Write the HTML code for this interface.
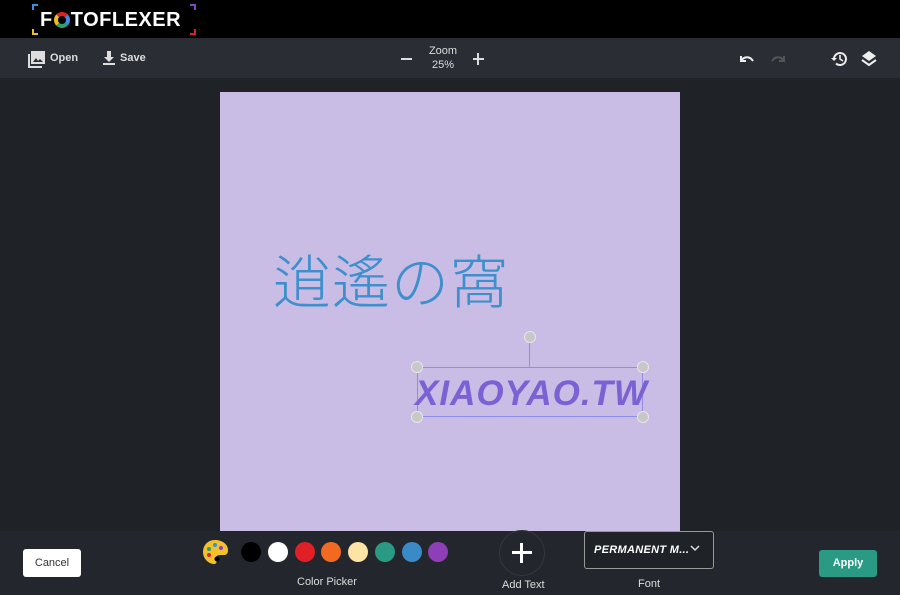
<!DOCTYPE html>
<html><head><meta charset="utf-8"><style>
*{margin:0;padding:0;box-sizing:border-box}
body{width:900px;height:595px;background:#1f2227;font-family:"Liberation Sans",sans-serif;position:relative;overflow:hidden;color:#fff}
.abs{position:absolute}
.h{width:12px;height:12px;border-radius:50%;background:#c8c8c8;border:1px solid #e6e6e6;position:absolute}
.dot{position:absolute;top:542px;width:20px;height:20px;border-radius:50%}
</style></head><body>
<div class="abs" style="left:0;top:0;width:900px;height:38px;background:#000"></div>
<!-- logo -->
<div class="abs" style="left:32px;top:4px;width:164px;height:31px">
<div class="abs" style="left:0;top:0;width:6px;height:6px;border-left:2px solid #3a8ee0;border-top:2px solid #3a8ee0"></div>
<div class="abs" style="left:0;bottom:0;width:6px;height:6px;border-left:2px solid #e8c020;border-bottom:2px solid #e8c020"></div>
<div class="abs" style="right:0;top:0;width:6px;height:6px;border-right:2px solid #7a4ac0;border-top:2px solid #7a4ac0"></div>
<div class="abs" style="right:0;bottom:0;width:6px;height:6px;border-right:2px solid #e02020;border-bottom:2px solid #e02020"></div>
<div class="abs" style="left:8px;top:5px;font-size:20px;font-weight:bold;letter-spacing:0.5px;color:#fff">F<span style="display:inline-block;width:16px;height:16px;border-radius:50%;border:4px solid;border-color:#e02020 #3a8ee0 #2aa070 #e8c020;vertical-align:-2px;margin:0 1px"></span>TOFLEXER</div>
</div>
<!-- toolbar -->
<div class="abs" style="left:0;top:38px;width:900px;height:40px;background:#2a2d34"></div>
<svg class="abs" style="left:28px;top:50px" width="18" height="18" viewBox="0 0 18 18"><rect x="3" y="1" width="14" height="13" fill="#ddd"/><path d="M5 12l3-4 2 3 2-2 3 3z" fill="#2a2d34"/><path d="M1 4v13h13" stroke="#ddd" stroke-width="2" fill="none"/></svg>
<div class="abs" style="left:50px;top:52px;font-size:11px;font-weight:bold;color:#ddd">Open</div>
<svg class="abs" style="left:102px;top:51px" width="14" height="15" viewBox="0 0 14 15"><path d="M5 0h4v6h3l-5 5-5-5h3z" fill="#ddd"/><rect x="1" y="12" width="12" height="2" fill="#ddd"/></svg>
<div class="abs" style="left:120px;top:52px;font-size:11px;font-weight:bold;color:#ddd">Save</div>
<div class="abs" style="left:401px;top:58px;width:11px;height:2px;background:#ddd"></div>
<div class="abs" style="left:428px;top:44px;font-size:11px;color:#ddd;text-align:center;width:30px;line-height:14px">Zoom<br>25%</div>
<div class="abs" style="left:473px;top:58px;width:11px;height:2px;background:#ddd"></div>
<div class="abs" style="left:477px;top:53px;width:2px;height:12px;background:#ddd"></div>
<svg class="abs" style="left:738px;top:52px" width="18" height="14" viewBox="0 0 18 14"><path d="M3 4v5h5" fill="none" stroke="#eee" stroke-width="2"/><path d="M3 9c3-5 9-5 12 0" fill="none" stroke="#eee" stroke-width="2"/></svg>
<svg class="abs" style="left:769px;top:52px" width="18" height="14" viewBox="0 0 18 14"><path d="M15 4v5h-5" fill="none" stroke="#555" stroke-width="2"/><path d="M15 9c-3-5-9-5-12 0" fill="none" stroke="#555" stroke-width="2"/></svg>
<svg class="abs" style="left:830px;top:50px" width="18" height="18" viewBox="0 0 18 18"><path d="M4 9a6 6 0 1 1 2 4.5" fill="none" stroke="#eee" stroke-width="2"/><path d="M1 8h6l-3 3z" fill="#eee"/><path d="M10 5v4l3 2" fill="none" stroke="#eee" stroke-width="1.6"/></svg>
<svg class="abs" style="left:861px;top:50px" width="16" height="17" viewBox="0 0 16 17"><path d="M8 1l7 5-7 5-7-5z" fill="#eee"/><path d="M1 10l7 5 7-5" fill="none" stroke="#eee" stroke-width="2"/></svg>
<!-- canvas -->
<div class="abs" style="left:220px;top:92px;width:460px;height:440px;background:#c9bde6"></div>
<div class="abs" style="left:273px;top:236px;font-family:'Noto Sans CJK JP',sans-serif;font-weight:300;font-size:58px;color:#3f8fcc;white-space:nowrap;letter-spacing:1px">逍遙の窩</div>
<div class="abs" style="left:529px;top:343px;width:1px;height:24px;background:#8e8ee8"></div>
<div class="abs" style="left:417px;top:367px;width:226px;height:50px;border:1px solid #8e8ee8"></div>
<div class="abs" style="left:415px;top:374px;font-size:35px;font-weight:bold;font-style:italic;color:#7b62d4;letter-spacing:1px;white-space:nowrap;transform:scaleX(1.0);transform-origin:left">XIAOYAO.TW</div>
<div class="h" style="left:524px;top:331px"></div>
<div class="h" style="left:411px;top:361px"></div>
<div class="h" style="left:637px;top:361px"></div>
<div class="h" style="left:411px;top:411px"></div>
<div class="h" style="left:637px;top:411px"></div>
<!-- bottom -->
<div class="abs" style="left:0;top:531px;width:900px;height:64px;background:#23262c"></div>
<div class="abs" style="left:23px;top:549px;width:58px;height:28px;background:#fff;border-radius:3px;color:#333;font-size:11px;text-align:center;line-height:28px">Cancel</div>
<svg class="abs" style="left:202px;top:539px" width="26" height="26" viewBox="0 0 26 26"><path d="M13 1C5 1 1 7 1 13c0 7 6 12 11 12 3 0 3-3 2-5s1-4 4-4h4c3 0 4-2 4-5C26 5 20 1 13 1z" fill="#f2c12e"/><circle cx="7" cy="10" r="2" fill="#2aa070"/><circle cx="13" cy="6" r="2" fill="#3a8ee0"/><circle cx="19" cy="9" r="2" fill="#8e3fc0"/><circle cx="7" cy="16" r="2" fill="#e02020"/><circle cx="15" cy="20" r="2.5" fill="#000"/></svg>
<div class="dot" style="left:241px;background:#000"></div>
<div class="dot" style="left:268px;background:#fff"></div>
<div class="dot" style="left:295px;background:#e01f26"></div>
<div class="dot" style="left:321px;background:#f26a21"></div>
<div class="dot" style="left:348px;background:#fde4a5"></div>
<div class="dot" style="left:375px;background:#2a9a84"></div>
<div class="dot" style="left:402px;background:#3a8ac8"></div>
<div class="dot" style="left:428px;background:#8e3fb8"></div>
<div class="abs" style="left:297px;top:576px;font-size:11px;color:#ddd">Color Picker</div>
<div class="abs" style="left:499px;top:530px;width:46px;height:46px;border-radius:50%;border:1px solid #33363d"></div>
<div class="abs" style="left:512px;top:551px;width:20px;height:3px;background:#fff"></div>
<div class="abs" style="left:520px;top:543px;width:3px;height:20px;background:#fff"></div>
<div class="abs" style="left:502px;top:579px;font-size:11px;color:#ddd">Add Text</div>
<div class="abs" style="left:584px;top:531px;width:130px;height:38px;border:1px solid #999;border-radius:3px;background:#1f2227"></div>
<div class="abs" style="left:594px;top:544px;font-size:11px;font-weight:bold;font-style:italic;color:#fff;letter-spacing:0.3px">PERMANENT M...</div>
<svg class="abs" style="left:690px;top:545px" width="10" height="7" viewBox="0 0 10 7"><path d="M1 1l4 4 4-4" fill="none" stroke="#ddd" stroke-width="1.5"/></svg>
<div class="abs" style="left:638px;top:578px;font-size:11px;color:#ddd">Font</div>
<div class="abs" style="left:819px;top:550px;width:58px;height:27px;background:#2a9a84;border-radius:3px;font-size:11px;font-weight:bold;text-align:center;line-height:27px">Apply</div>
</body></html>
